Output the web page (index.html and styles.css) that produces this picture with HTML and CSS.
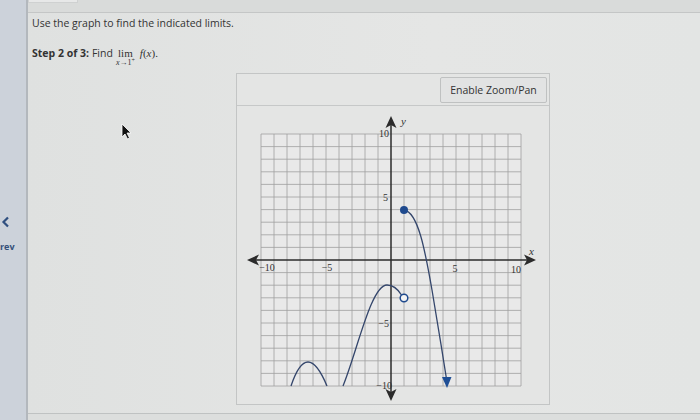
FILE: index.html
```html
<!DOCTYPE html>
<html>
<head>
<meta charset="utf-8">
<link rel="stylesheet" href="styles.css">
</head>
<body>
<div class="app">
  <aside class="sidebar">
    <svg class="nav-arrow" width="10" height="12" viewBox="0 0 10 12"><path d="M7 1.5 L2.5 6 L7 10.5" fill="none" stroke="#2f4f7f" stroke-width="2.2"/></svg>
    <span class="nav-label">rev</span>
  </aside>
  <main class="main">
    <div class="topbar"><span class="tab"></span></div>
    <div class="content">
      <p class="prompt">Use the graph to find the indicated limits.</p>
      <div class="step">
        <b class="step-label">Step 2 of 3:</b><span class="find">Find</span>
        <span class="lim"><span class="lim-word">lim</span><span class="lim-sub"><i>x</i>→1<sup>+</sup></span></span>
        <span class="fx"><i>f</i>(<i>x</i>).</span>
      </div>
      <section class="panel">
        <div class="panel-head"><button class="zoom-btn">Enable Zoom/Pan</button></div>
        <svg class="graph" width="312" height="298" viewBox="237 106 312 298">
          <rect x="261" y="134" width="260" height="252" fill="#e9e9e9"/>
          <path fill="none" stroke="#a0a0a0" stroke-width="0.8" d="M261,134V386M274,134V386M287,134V386M300,134V386M313,134V386M326,134V386M339,134V386M352,134V386M365,134V386M378,134V386M404,134V386M417,134V386M430,134V386M443,134V386M456,134V386M469,134V386M482,134V386M495,134V386M508,134V386M521,134V386M261,134H521M261,146.6H521M261,159.2H521M261,171.8H521M261,184.4H521M261,197H521M261,209.6H521M261,222.2H521M261,234.8H521M261,247.4H521M261,272.6H521M261,285.2H521M261,297.8H521M261,310.4H521M261,323H521M261,335.6H521M261,348.2H521M261,360.8H521M261,373.4H521M261,386H521"/>
          <g fill="#2b2b2b">
            <path d="M254,260H529" stroke="#2b2b2b" stroke-width="1.5"/>
            <path d="M391,122V395" stroke="#2b2b2b" stroke-width="1.5"/>
            <path d="M247,260 L259,254.5 L256,260 L259,265.5 Z"/>
            <path d="M536,260 L524,254.5 L527,260 L524,265.5 Z"/>
            <path d="M391,116 L385.5,128 L391,125 L396.5,128 Z"/>
            <path d="M391,401 L385.5,389 L391,392 L396.5,389 Z"/>
          </g>
          <g class="tick" font-size="10" fill="#333">
            <text x="267" y="271" text-anchor="middle">−10</text>
            <text x="327" y="271" text-anchor="middle">−5</text>
            <text x="455" y="272" text-anchor="middle">5</text>
            <text x="516" y="273" text-anchor="middle">10</text>
            <text x="389" y="137" text-anchor="end">10</text>
            <text x="388" y="201" text-anchor="end">5</text>
            <text x="389" y="327" text-anchor="end">−5</text>
            <text x="392" y="389" text-anchor="end">−10</text>
            <text x="401" y="125" font-style="italic" font-size="11">y</text>
            <text x="529" y="255" font-style="italic" font-size="11">x</text>
          </g>
          <g fill="none" stroke="#34466c" stroke-width="1.3">
            <path d="M291,386 Q307,338 327,386"/>
            <path d="M343,386 C357,352 371,285 387,285 C395,285 399,291 401.5,295"/>
            <path d="M404,210 C418,212 425,250 432,290 C436,314 442,350 446.5,379"/>
          </g>
          <path d="M447,388 L442,377 L451.5,377 Z" fill="#1f4f96"/>
          <circle cx="404" cy="210" r="4" fill="#1f4a8e"/>
          <circle cx="404" cy="298" r="3.8" fill="#f4f4f4" stroke="#1f4a8e" stroke-width="1.5"/>
        </svg>
      </section>
    </div>
    <div class="footer"></div>
  </main>
</div>
<svg class="cursor" width="12" height="17" viewBox="0 0 12 17"><path d="M1,1 L1,14 L4,11 L6.5,16 L8.5,15 L6,10 L10,10 Z" fill="#111" stroke="#fff" stroke-width="0.8"/></svg>
</body>
</html>
```
FILE: styles.css
```css
* { box-sizing: border-box; }
html, body { margin: 0; padding: 0; }
body {
  width: 700px;
  height: 420px;
  overflow: hidden;
  background: #e1e3e2;
  font-family: "Open Sans", "Noto Sans", sans-serif;
  color: #333;
  position: relative;
}
.app { display: flex; height: 420px; }
.sidebar {
  width: 28px;
  flex: none;
  background: #ccd2da;
  border-right: 2px solid #b3b8bd;
  overflow: hidden;
  display: flex;
  flex-direction: column;
  padding-top: 216px;
}
.nav-arrow { display: block; margin-left: 1px; }
.nav-label {
  margin-top: 14px;
  margin-left: 0;
  font-size: 9px;
  line-height: 10px;
  font-weight: 700;
  color: #34507a;
}
.main {
  flex: 1;
  display: flex;
  flex-direction: column;
  background: linear-gradient(90deg, #dfe1e0 0%, #e5e6e5 60%, #e3e5e4 100%);
}
.topbar {
  height: 13px;
  flex: none;
  border-bottom: 1px solid #c4c6c6;
  background: #d9dbda;
}
.tab {
  display: block;
  width: 50px;
  height: 3px;
  background: #e7e8e8;
  border: 1px solid #cfd1d1;
  border-top: none;
}
.content {
  flex: 1;
  padding: 3px 0 0 4px;
}
.prompt {
  margin: 0;
  font-size: 10.5px;
  line-height: 14px;
}
.step {
  margin-top: 16px;
  display: flex;
  align-items: flex-start;
  font-size: 10.5px;
  line-height: 14px;
}
.step-label { font-weight: 700; }
.find { margin-left: 3px; }
.lim {
  display: flex;
  flex-direction: column;
  align-items: center;
  margin-left: 3px;
  font-family: "Liberation Serif", serif;
}
.lim-word { font-size: 11px; line-height: 14px; }
.lim-sub { font-size: 8px; line-height: 8px; margin-top: -1px; }
.lim-sub sup { font-size: 6px; vertical-align: 3px; line-height: 0; }
.fx {
  margin-left: 5px;
  font-family: "Liberation Serif", serif;
  font-size: 11px;
}
.panel {
  margin-top: 6px;
  margin-left: 204px;
  width: 314px;
  height: 332px;
  border: 1px solid #c3c5c5;
  background: #e4e5e4;
  display: flex;
  flex-direction: column;
}
.panel-head {
  height: 32px;
  flex: none;
  border-bottom: 1px solid #c6c8c8;
  display: flex;
  justify-content: flex-end;
  align-items: flex-start;
  padding: 3px 2px 0 0;
}
.zoom-btn {
  width: 107px;
  height: 26px;
  padding: 0;
  border: 1px solid #bfc1c1;
  border-radius: 2px;
  background: #e2e3e3;
  font-family: "Open Sans", "Noto Sans", sans-serif;
  font-size: 10.5px;
  color: #333;
}
.graph { display: block; }
.tick { font-family: "Liberation Serif", serif; }
.footer {
  height: 7px;
  flex: none;
  border-top: 1px solid #bfc2c2;
  background: #dcdedd;
}
.cursor { position: absolute; left: 121px; top: 123px; }
```
